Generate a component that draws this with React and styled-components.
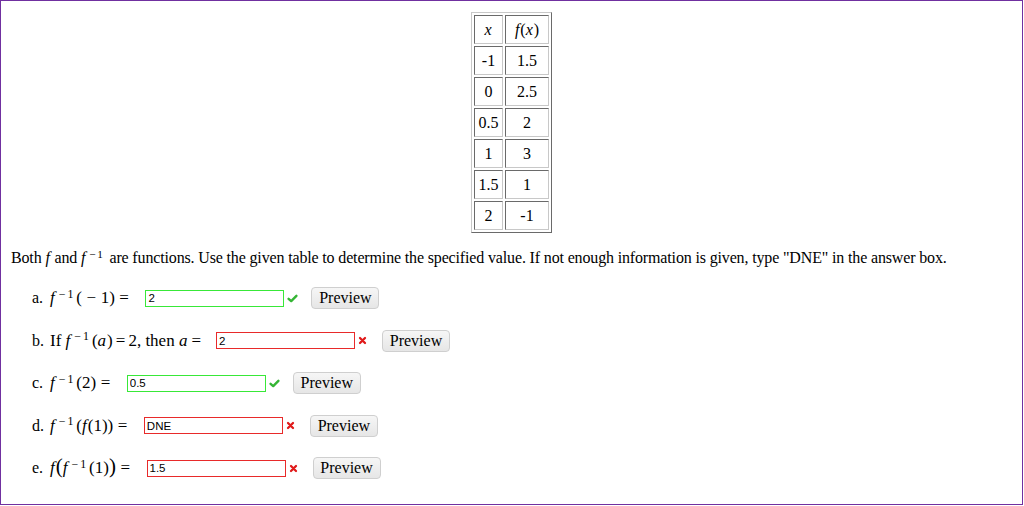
import React from "react";
import styled, { createGlobalStyle } from "styled-components";

const Global = createGlobalStyle`
  html, body { margin: 0; padding: 0; background: #fff; }
  body { font-family: "Liberation Serif", "Times New Roman", serif; color: #000; }
`;

const Frame = styled.div`
  box-sizing: border-box;
  width: 1023px;
  height: 505px;
  border: 1px solid #7030a0;
  padding-top: 11px;
  font-size: 16px;
`;

const Table = styled.table`
  margin: 0 auto;
  border-collapse: separate;
  border-spacing: 2px;
  border: 1px solid;
  border-color: #c8c8c8 #6a6a6a #6a6a6a #c8c8c8;
`;

const Cell = styled.td`
  box-sizing: border-box;
  width: ${(p) => p.$w}px;
  height: 29px;
  padding: 0;
  text-align: center;
  vertical-align: middle;
  border: 1px solid;
  border-color: #6a6a6a #c8c8c8 #c8c8c8 #6a6a6a;
  font-size: 16px;
  line-height: 18px;
`;

const I = styled.i`
  font-style: italic;
  padding-right: 1px;
`;

const Intro = styled.p`
  margin: 16px 0 0 10px;
  font-size: 16px;
  line-height: 18px;
  letter-spacing: -0.15px;
`;

const Sup = styled.sup`
  font-size: 0.7em;
  vertical-align: 0;
  position: relative;
  top: -0.45em;
  margin-left: 3px;
  margin-right: 3px;
  word-spacing: -1px;
`;

const List = styled.div`
  margin-top: 9px;
`;

const Row = styled.div`
  display: flex;
  align-items: center;
  height: 42.5px;
  padding-left: 31px;
  font-size: 16px;
`;

const Label = styled.span`
  width: 18px;
  flex: none;
`;

const Op = styled.span`
  margin: 0 4.5px;
`;

const Math = styled.span`
  white-space: pre;
  font-size: 17px;
  margin-right: 12px;
  ${(p) => (p.$tight ? `& ${Op} { margin: 0 3px; }` : "")}
`;

const Big = styled.span`
  font-size: 21px;
  line-height: 16px;
`;

const Answer = styled.input`
  box-sizing: border-box;
  width: 139px;
  height: 17px;
  margin: 0;
  padding: 0 2px;
  border: 1px solid ${(p) => (p.$ok ? "#38e838" : "#e82a2a")};
  font-family: "Liberation Sans", Arial, sans-serif;
  font-size: 11.5px;
  color: #000;
  outline: none;
`;

const Mark = styled.svg`
  flex: none;
  margin-left: 3px;
  margin-right: ${(p) => (p.$ok ? 0 : 2)}px;
`;

const Preview = styled.button`
  box-sizing: border-box;
  margin-left: 13px;
  width: 68px;
  height: 22px;
  padding: 0;
  border: 1px solid #cfcfcf;
  border-radius: 4px;
  background: linear-gradient(#f6f6f6, #e6e6e6);
  font-family: "Liberation Serif", "Times New Roman", serif;
  font-size: 16px;
  color: #000;
`;

const Check = () => (
  <Mark $ok width="11" height="9" viewBox="0 0 11 9">
    <path d="M1.6 4.8 L4.2 7.1 L9.4 1.8" fill="none" stroke="#35b535" strokeWidth="2.4" strokeLinecap="round" strokeLinejoin="round" />
  </Mark>
);

const Cross = () => (
  <Mark width="9" height="9" viewBox="0 0 9 9">
    <path d="M2 2 L7 7 M7 2 L2 7" fill="none" stroke="#e01a1a" strokeWidth="2.3" strokeLinecap="round" />
  </Mark>
);

const rows = [
  ["x", "f(x)"],
  ["-1", "1.5"],
  ["0", "2.5"],
  ["0.5", "2"],
  ["1", "3"],
  ["1.5", "1"],
  ["2", "-1"],
];

const F = () => (
  <>
    <I>f</I>
    <Sup>− 1</Sup>
  </>
);

const Eq = () => <Op>=</Op>;

const questions = [
  {
    l: "a.",
    m: (
      <>
        <F />(<Op>−</Op>1)
        <Eq />
      </>
    ),
    v: "2",
    ok: true,
  },
  {
    l: "b.",
    tight: true,
    m: (
      <>
        If <F />(<I>a</I>)<Eq />2, then <I>a</I>
        <Eq />
      </>
    ),
    v: "2",
    ok: false,
  },
  {
    l: "c.",
    m: (
      <>
        <F />(2)
        <Eq />
      </>
    ),
    v: "0.5",
    ok: true,
  },
  {
    l: "d.",
    m: (
      <>
        <F />(<I>f</I>(1))
        <Eq />
      </>
    ),
    v: "DNE",
    ok: false,
  },
  {
    l: "e.",
    m: (
      <>
        <I>f</I>
        <Big>(</Big>
        <F />
        (1)
        <Big>)</Big>
        <Eq />
      </>
    ),
    v: "1.5",
    ok: false,
  },
];

export default function App() {
  return (
    <>
      <Global />
      <Frame>
        <Table>
          <tbody>
            {rows.map((r, i) => (
              <tr key={i}>
                <Cell $w={29}>{i === 0 ? <I>x</I> : r[0]}</Cell>
                <Cell $w={44}>
                  {i === 0 ? (
                    <>
                      <I>f</I>(<I>x</I>)
                    </>
                  ) : (
                    r[1]
                  )}
                </Cell>
              </tr>
            ))}
          </tbody>
        </Table>
        <Intro>
          Both <I>f</I> and <F /> are functions. Use the given table to determine the
          specified value. If not enough information is given, type "DNE" in the answer box.
        </Intro>
        <List>
          {questions.map((q) => (
            <Row key={q.l}>
              <Label>{q.l}</Label>
              <Math $tight={q.tight}>{q.m}</Math>
              <Answer $ok={q.ok} defaultValue={q.v} readOnly />
              {q.ok ? <Check /> : <Cross />}
              <Preview type="button">Preview</Preview>
            </Row>
          ))}
        </List>
      </Frame>
    </>
  );
}
